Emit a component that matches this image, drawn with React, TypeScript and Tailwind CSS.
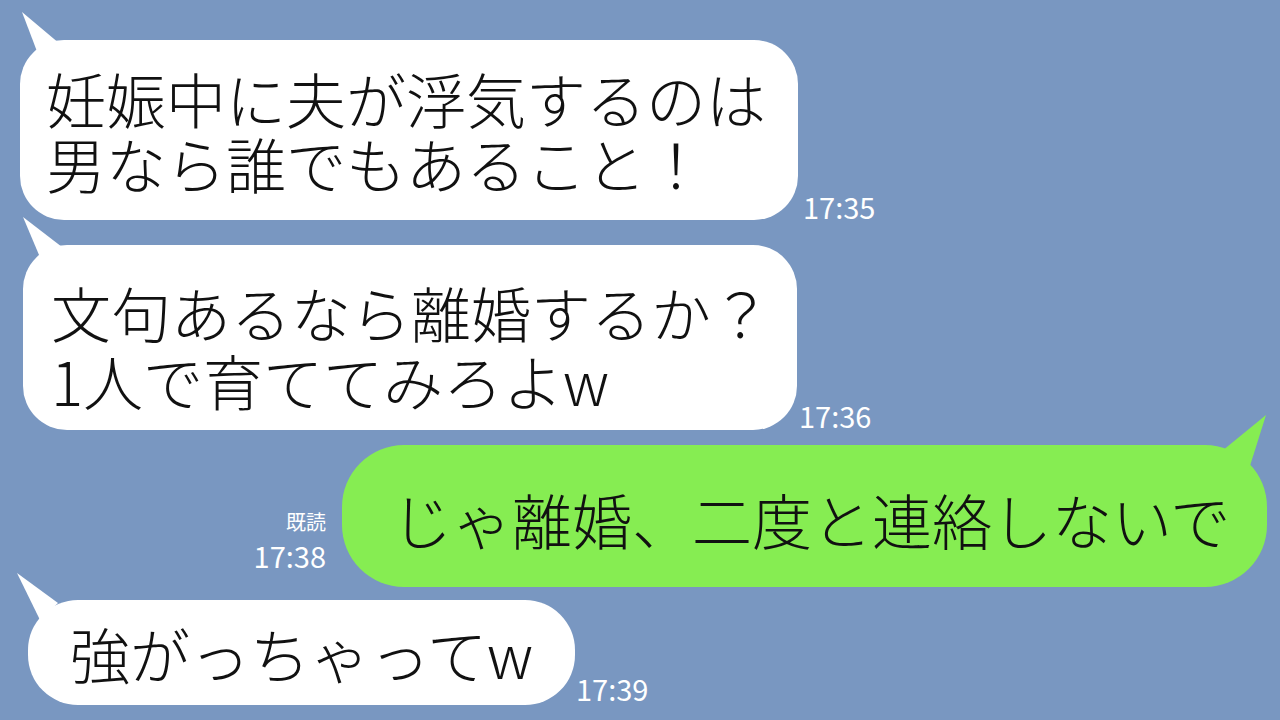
import React from "react";

const FONT = { fontFamily: '"Noto Sans CJK JP", "Noto Sans", sans-serif' };

type TailProps = { side: "left" | "right"; points: string; color: string };

const Tail: React.FC<TailProps> = ({ side, points, color }) => (
  <svg
    className={`absolute -top-[40px] ${side === "left" ? "-left-[20px]" : "-right-[20px]"} pointer-events-none`}
    width="80"
    height="80"
    viewBox="0 0 80 80"
  >
    <polygon points={points} fill={color} />
  </svg>
);

const Time: React.FC<{ text: string; className?: string }> = ({ text, className }) => (
  <span className={`text-[29px] font-normal leading-none text-white ${className ?? ""}`}>{text}</span>
);

export default function App() {
  return (
    <div className="w-[1280px] h-[720px] overflow-hidden bg-[#7997c1] flex flex-col font-light" style={FONT}>
      {/* message 1 */}
      <div className="flex items-end pt-[40px] pl-[20px]">
        <div className="relative w-[778px] h-[180px] bg-white rounded-[44px] pl-[26px] pt-[25px] text-[60px] leading-[65px] text-[#111]">
          <Tail side="left" points="22,12 38,54 60,44" color="#fff" />
          <p className="relative">妊娠中に夫が浮気するのは</p>
          <p className="relative">男なら誰でもあること！</p>
        </div>
        <Time text="17:35" className="ml-[5px] mb-[-1px]" />
      </div>

      {/* message 2 */}
      <div className="flex items-end pt-[25px] pl-[23px]">
        <div className="relative w-[774px] h-[185px] bg-white rounded-[44px] pl-[28px] pt-[33px] text-[60px] leading-[68px] text-[#111]">
          <Tail side="left" points="20,12 39,57 59,42" color="#fff" />
          <p className="relative">文句あるなら離婚するか？</p>
          <p className="relative">1人で育ててみろよw</p>
        </div>
        <Time text="17:36" className="ml-[2px] mb-[0px]" />
      </div>

      {/* message 3 (mine) */}
      <div className="flex items-end justify-end pt-[15px] pr-[13px]">
        <div className="flex flex-col items-end mr-[16px] mb-[17px] text-white font-normal">
          <span className="text-[20px] leading-none mb-[9px]">既読</span>
          <span className="text-[29px] leading-none">17:38</span>
        </div>
        <div className="relative w-[925px] h-[142px] bg-[#86ed52] rounded-[62px] pl-[50px] pt-[44px] text-[60px] leading-[60px] text-[#111]">
          <Tail side="right" points="59,10 15,46 42,64" color="#86ed52" />
          <p className="relative">じゃ離婚、二度と連絡しないで</p>
        </div>
      </div>

      {/* message 4 */}
      <div className="flex items-end pt-[13px] pl-[28px]">
        <div className="relative w-[547px] h-[105px] bg-white rounded-[50px] pl-[42px] flex items-center text-[60px] leading-[60px] text-[#111]">
          <Tail side="left" points="9,13 32,60 50,43" color="#fff" />
          <p className="relative">強がっちゃってw</p>
        </div>
        <Time text="17:39" className="ml-[1px] mb-[2px]" />
      </div>
    </div>
  );
}
